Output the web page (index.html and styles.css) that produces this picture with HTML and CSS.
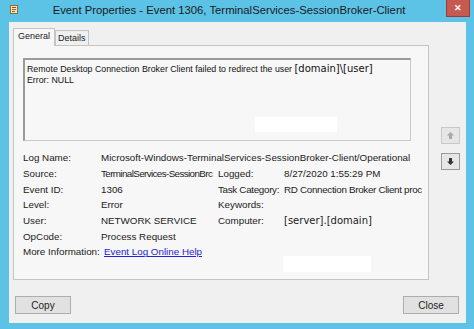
FILE: index.html
```html
<!DOCTYPE html>
<html lang="en">
<head>
  <meta charset="UTF-8" />
  <title>Event Properties</title>
  <link rel="stylesheet" href="styles.css">
</head>
<body>
  <div class="window">
    <div class="titlebar">
      <svg class="app-icon" width="8" height="9" viewBox="0 0 8 9">
        <rect x="0.5" y="0.5" width="7" height="8" fill="#f3e7b0" stroke="#8a6d3b" />
        <rect x="2" y="2" width="4" height="1" fill="#c0392b" />
        <rect x="2" y="4" width="4" height="1" fill="#7a6a4a" />
        <rect x="2" y="6" width="3" height="1" fill="#7a6a4a" />
      </svg>
      <div class="title">Event Properties - Event 1306, TerminalServices-SessionBroker-Client</div>
      <button class="close-btn">&#x2715;</button>
    </div>

    <div class="content">
      <div class="tabs">
        <div class="tab active">General</div>
        <div class="tab">Details</div>
      </div>

      <div class="main">
        <div class="panel">
          <div class="message">
            <div>Remote Desktop Connection Broker Client failed to redirect the user <span class="big">[domain]\[user]</span></div>
            <div>Error: NULL</div>
            <div class="redact redact-one"></div>
          </div>

          <div class="fields">
            <div class="lbl">Log Name:</div>
            <div class="val wide">Microsoft-Windows-TerminalServices-SessionBroker-Client/Operational</div>

            <div class="lbl">Source:</div>
            <div class="val tight">TerminalServices-SessionBrc</div>
            <div class="lbl">Logged:</div>
            <div class="val">8/27/2020 1:55:29 PM</div>

            <div class="lbl">Event ID:</div>
            <div class="val">1306</div>
            <div class="lbl narrow">Task Category:</div>
            <div class="val narrow">RD Connection Broker Client proc</div>

            <div class="lbl">Level:</div>
            <div class="val">Error</div>
            <div class="lbl">Keywords:</div>
            <div class="val"></div>

            <div class="lbl">User:</div>
            <div class="val">NETWORK SERVICE</div>
            <div class="lbl">Computer:</div>
            <div class="val big">[server].[domain]</div>

            <div class="lbl">OpCode:</div>
            <div class="val wide">Process Request</div>

            <div class="lbl">More Information:</div>
            <div class="val wide"><a class="link" href="#">Event Log Online Help</a></div>
          </div>
          <div class="redact redact-two"></div>
        </div>

        <div class="side">
          <div class="arrow-btn">
            <svg width="9" height="9" viewBox="0 0 9 9"><path d="M4.5 1 L8 4.5 H6 V8 H3 V4.5 H1 Z" fill="#a8a8a8" /></svg>
          </div>
          <div class="arrow-btn dark">
            <svg width="9" height="9" viewBox="0 0 9 9"><path d="M4.5 8 L8 4.5 H6 V1 H3 V4.5 H1 Z" fill="#333" /></svg>
          </div>
        </div>
      </div>

      <div class="actions">
        <button class="btn">Copy</button>
        <button class="btn">Close</button>
      </div>
    </div>
  </div>
</body>
</html>
```

FILE: styles.css
```css
* {
  margin: 0;
  padding: 0;
  box-sizing: border-box;
  font-family: 'Liberation Sans', Arial, sans-serif;
}

body {
  width: 474px;
  height: 329px;
  overflow: hidden;
  background: #5dc3e6;
}

.window {
  display: flex;
  flex-direction: column;
  height: 329px;
}

.titlebar {
  height: 22px;
  display: flex;
  align-items: center;
  position: relative;
  padding-left: 10px;
}

.app-icon {
  margin-top: -3px;
}

.title {
  flex: 1;
  text-align: center;
  font-size: 11.3px;
  color: #1a1a1a;
  margin-top: -2px;
  padding-right: 6px;
}

.close-btn {
  width: 24px;
  height: 17px;
  margin-right: 4px;
  align-self: flex-start;
  background: #c75a50;
  border: 1px solid #9c3d35;
  border-top: none;
  color: #fff;
  font-size: 9px;
  font-weight: bold;
}

.content {
  margin: 0 8px 0 9px;
  height: 301px;
  background: #f0f0f0;
  padding: 6px 0 0 4px;
  display: flex;
  flex-direction: column;
}

.tabs {
  display: flex;
  align-items: flex-end;
  height: 17px;
}

.tab {
  font-size: 9px;
  color: #222;
  border: 1px solid #c4c4c4;
  border-bottom: none;
  padding: 0 2px;
  height: 15px;
  line-height: 14px;
  background: #f0f0f0;
}

.tab.active {
  height: 18px;
  line-height: 15px;
  background: #f7f7f7;
  margin-bottom: -1px;
  position: relative;
  z-index: 1;
  padding: 0 4px;
}

.main {
  display: flex;
}

.panel {
  width: 417px;
  height: 235px;
  border: 1px solid #c4c4c4;
  background: #f7f7f7;
  padding: 12px 0 0 9px;
  position: relative;
}

.message {
  width: 388px;
  height: 83px;
  border: 1px solid #c9c9c9;
  border-top: 2px solid #9a9a9a;
  border-left: 2px solid #9a9a9a;
  padding: 3px 2px;
  font-size: 8.8px;
  line-height: 11px;
  color: #111;
  position: relative;
  white-space: nowrap;
}

.big {
  font-family: 'DejaVu Sans', sans-serif;
  font-size: 10px;
}

.redact {
  position: absolute;
  background: #fff;
}

.redact-one {
  left: 230px;
  top: 57px;
  width: 82px;
  height: 15px;
}

.redact-two {
  left: 269px;
  top: 210px;
  width: 88px;
  height: 16px;
}

.fields {
  display: grid;
  grid-template-columns: 78px 117px 66px 1fr;
  grid-auto-rows: 15.7px;
  align-items: center;
  margin-top: 9px;
  font-size: 9.8px;
  color: #222;
  white-space: nowrap;
}

.tight {
  letter-spacing: -0.6px;
}

.narrow {
  letter-spacing: -0.3px;
}

.wide {
  grid-column: 2 / 5;
}

.link {
  color: #2323d6;
  margin-left: 3px;
}

.side {
  width: 37px;
  display: flex;
  flex-direction: column;
  align-items: center;
  padding: 82px 0 0 5px;
  gap: 9px;
}

.arrow-btn {
  width: 19px;
  height: 17px;
  border: 1px solid #c8c8c8;
  background: #e6e6e6;
  display: flex;
  align-items: center;
  justify-content: center;
}

.arrow-btn.dark {
  border-color: #9a9a9a;
}

.actions {
  display: flex;
  justify-content: space-between;
  padding: 16px 7px 0 2px;
}

.btn {
  width: 56px;
  height: 18px;
  background: #e1e1e1;
  border: 1px solid #adadad;
  font-size: 10px;
  color: #222;
}
```
